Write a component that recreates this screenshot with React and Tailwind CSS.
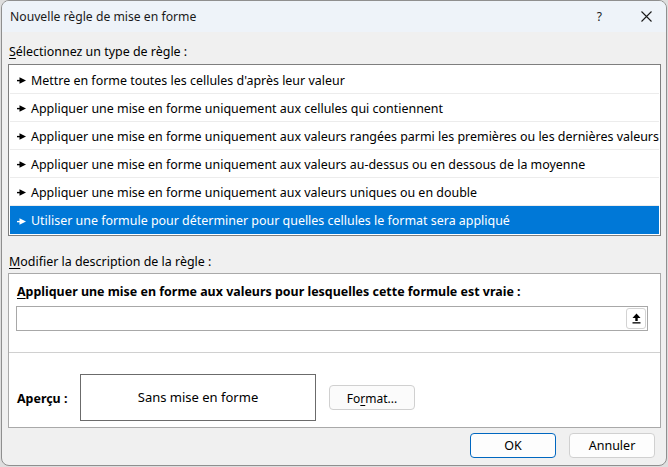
import React from "react";

const rows = [
  "Mettre en forme toutes les cellules d'après leur valeur",
  "Appliquer une mise en forme uniquement aux cellules qui contiennent",
  "Appliquer une mise en forme uniquement aux valeurs rangées parmi les premières ou les dernières valeurs",
  "Appliquer une mise en forme uniquement aux valeurs au-dessus ou en dessous de la moyenne",
  "Appliquer une mise en forme uniquement aux valeurs uniques ou en double",
  "Utiliser une formule pour déterminer pour quelles cellules le format sera appliqué",
];

function Pointer({ color }) {
  return (
    <svg width="9" height="7" viewBox="0 0 9 7" className="shrink-0">
      <rect x="0" y="2.9" width="3" height="1.4" fill={color} />
      <polygon points="2.5,0.3 9,3.5 2.5,6.7" fill={color} />
    </svg>
  );
}

export default function App() {
  return (
    <div
      className="w-[668px] h-[467px] bg-[#dedede] pl-px overflow-hidden text-[12.45px] text-black"
      style={{ fontFamily: '"Noto Sans", "Open Sans", sans-serif' }}
    >
      <div className="w-[666px] h-[466px] rounded-lg border border-[#8f8f8f] bg-[#f0f0f0] flex flex-col overflow-hidden">
        {/* Title bar */}
        <div className="h-[31px] shrink-0 bg-[#eef3f9] flex items-center pl-[8px] pr-[14px]">
          <span className="text-[#1a1a1a] leading-[16px] text-[12.2px]">Nouvelle règle de mise en forme</span>
          <div className="flex-1" />
          <span className="text-[#1a1a1a] text-[12px] mr-[39px]">?</span>
          <svg width="11" height="11" viewBox="0 0 11 11">
            <path d="M0.5 0.5 L10.5 10.5 M10.5 0.5 L0.5 10.5" stroke="#1a1a1a" strokeWidth="1.1" />
          </svg>
        </div>

        {/* Body */}
        <div className="flex flex-col pl-[6px] pr-[5px]">
          <div className="pt-[12px] h-[28px] leading-[16px] pl-[1px]">
            <span className="underline underline-offset-2">S</span>électionnez un type de règle :
          </div>

          <div className="mt-[4px] h-[172px] border border-[#7e7e7e] bg-white p-px">
            {rows.map((r, i) => {
              const sel = i === rows.length - 1;
              return (
                <div
                  key={i}
                  className={
                    sel
                      ? "h-[28px] flex items-center gap-[5px] pl-[7px] pt-[2px] bg-[#0078d7] text-white whitespace-nowrap"
                      : "h-[28px] flex items-center gap-[5px] pl-[7px] pt-[2px] border-b border-[#ececec] whitespace-nowrap"
                  }
                >
                  <Pointer color={sel ? "#ffffff" : "#000000"} />
                  <span className="leading-[16px]">{r}</span>
                </div>
              );
            })}
          </div>

          <div className="mt-[18px] h-[16px] leading-[16px] pl-[1px]">
            <span className="underline underline-offset-2">M</span>odifier la description de la règle :
          </div>

          <div className="mt-[3px] h-[155px] border border-[#a9a9a9] bg-white flex flex-col">
            <div className="pt-[10px] h-[26px] leading-[16px] pl-[8px] font-bold">
              <span className="underline underline-offset-2">A</span>ppliquer une mise en forme aux valeurs pour lesquelles cette formule est vraie :
            </div>
            <div className="mt-[6px] ml-[7px] mr-[12px] h-[25px] border border-[#a8a8a8] bg-white flex items-center justify-end pr-px">
              <div className="w-[20px] h-[21px] rounded-[3px] border border-[#d3d3d3] bg-white flex items-center justify-center">
                <svg width="9" height="11" viewBox="0 0 9 11">
                  <polygon points="4.5,0.5 8.5,5 0.5,5" fill="#000" />
                  <rect x="3.3" y="4.5" width="2.4" height="3.5" fill="#000" />
                  <rect x="0.5" y="9.2" width="8" height="1.3" fill="#000" />
                </svg>
              </div>
            </div>
            <div className="mt-[21px] h-px bg-[#d0d0d0]" />
            <div className="flex items-center pl-[8px] mt-[21px]">
              <span className="font-bold w-[63px] leading-[16px] pt-[2px]">Aperçu :</span>
              <div className="w-[236px] h-[47px] border border-[#6b6b6b] flex items-center justify-center text-[13px] pt-px">
                Sans mise en forme
              </div>
              <button className="ml-[13px] w-[86px] h-[25px] rounded-[4px] border border-[#d0d0d0] bg-[#fbfbfb] flex items-center justify-center text-[12px] pt-[2px]">
                Fo<span className="underline underline-offset-2">r</span>mat...
              </button>
            </div>
          </div>

          <div className="mt-[5px] flex justify-end gap-[13px] pr-[6px] text-[12.5px]">
            <button className="w-[86px] h-[25px] rounded-[4px] border border-[#0067c0] bg-[#fdfdfd] flex items-center justify-center pt-[2px]">
              OK
            </button>
            <button className="w-[86px] h-[25px] rounded-[4px] border border-[#d0d0d0] bg-[#fdfdfd] flex items-center justify-center pt-[2px]">
              Annuler
            </button>
          </div>
        </div>
      </div>
    </div>
  );
}
